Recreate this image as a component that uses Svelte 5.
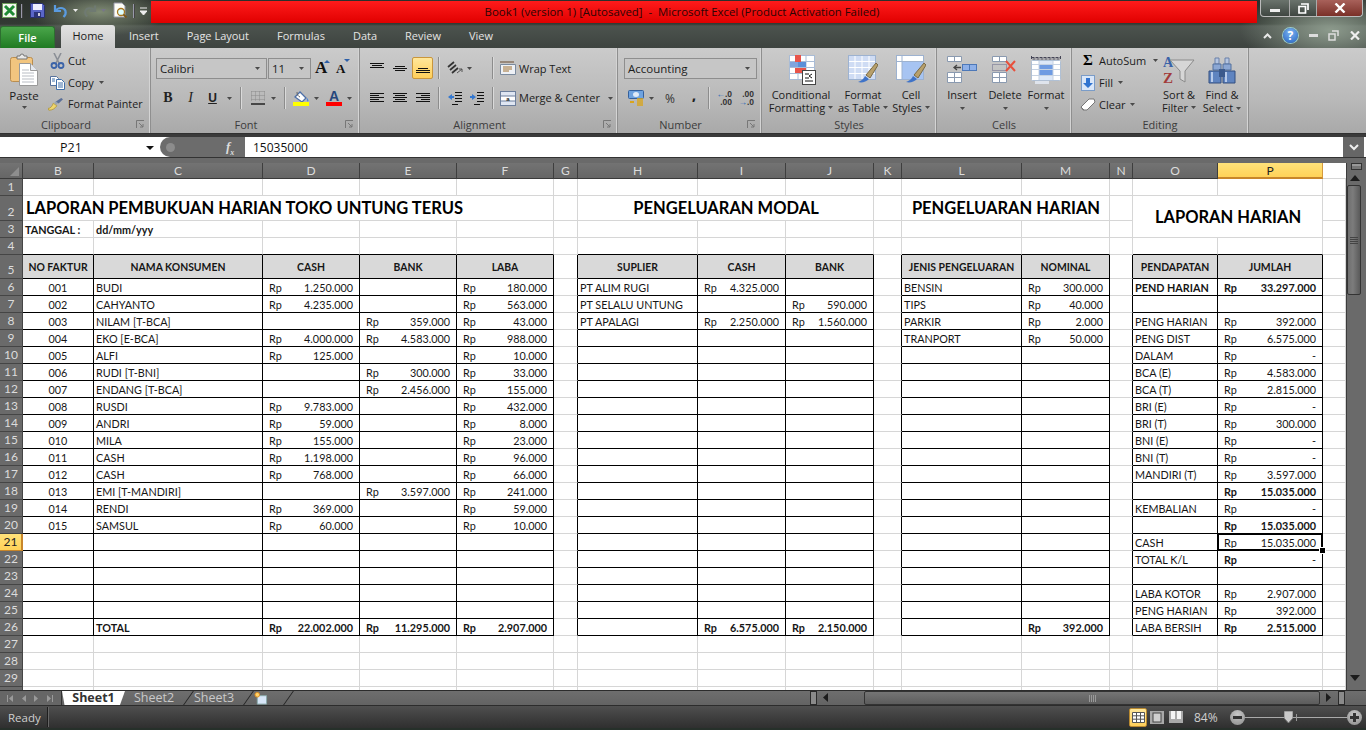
<script>
  const cols = ['A','B','C','D','E','F','G','H','I','J','K','L','M','N','O','P','Q'];
  const rows = Array.from({ length: 30 }, (_, i) => i + 1);
  const blocks = [['B','F'],['H','J'],['L','M'],['O','P']];
  const ci = (c) => cols.indexOf(c);
  const inBlock = (c, r) => r >= 5 && r <= 26 && blocks.some(([a, b]) => c >= ci(a) && c <= ci(b));

  const cells = {};
  const T = (k, t, cls = '') => (cells[k] = { t, cls });
  const R = (k, v, b = false, rb = b) => (cells[k] = { v, b, rb });

  T('B2', 'LAPORAN PEMBUKUAN HARIAN TOKO UNTUNG TERUS', 'title');
  T('H2', 'PENGELUARAN MODAL', 'title ctr');
  T('L2', 'PENGELUARAN HARIAN', 'title ctr');
  T('O2', 'LAPORAN HARIAN', 'title ctr');
  T('B3', 'TANGGAL :', 'bold');
  T('C3', 'dd/mm/yyy', 'bold');
  const heads = { B: 'NO FAKTUR', C: 'NAMA KONSUMEN', D: 'CASH', E: 'BANK', F: 'LABA', H: 'SUPLIER', I: 'CASH', J: 'BANK', L: 'JENIS PENGELUARAN', M: 'NOMINAL', O: 'PENDAPATAN', P: 'JUMLAH' };
  for (const c in heads) T(c + '5', heads[c], 'head');

  const sales = [
    ['BUDI','1.250.000','','180.000'],['CAHYANTO','4.235.000','','563.000'],['NILAM [T-BCA]','','359.000','43.000'],
    ['EKO [E-BCA]','4.000.000','4.583.000','988.000'],['ALFI','125.000','','10.000'],['RUDI [T-BNI]','','300.000','33.000'],
    ['ENDANG [T-BCA]','','2.456.000','155.000'],['RUSDI','9.783.000','','432.000'],['ANDRI','59.000','','8.000'],
    ['MILA','155.000','','23.000'],['CASH','1.198.000','','96.000'],['CASH','768.000','','66.000'],
    ['EMI [T-MANDIRI]','','3.597.000','241.000'],['RENDI','369.000','','59.000'],['SAMSUL','60.000','','10.000']
  ];
  sales.forEach(([n, d, e, f], i) => {
    const r = i + 6;
    T('B' + r, String(i + 1).padStart(3, '0'), 'ctr');
    T('C' + r, n);
    if (d) R('D' + r, d);
    if (e) R('E' + r, e);
    R('F' + r, f);
  });
  T('C26', 'TOTAL', 'bold');
  R('D26', '22.002.000', true); R('E26', '11.295.000', true); R('F26', '2.907.000', true);

  T('H6', 'PT ALIM RUGI'); R('I6', '4.325.000');
  T('H7', 'PT SELALU UNTUNG'); R('J7', '590.000');
  T('H8', 'PT APALAGI'); R('I8', '2.250.000'); R('J8', '1.560.000');
  R('I26', '6.575.000', true); R('J26', '2.150.000', true);

  [['BENSIN','300.000'],['TIPS','40.000'],['PARKIR','2.000'],['TRANPORT','50.000']].forEach(([n, v], i) => {
    T('L' + (i + 6), n); R('M' + (i + 6), v);
  });
  R('M26', '392.000', true);

  const report = {
    6: ['PEND HARIAN','33.297.000',1,1], 8: ['PENG HARIAN','392.000'], 9: ['PENG DIST','6.575.000'], 10: ['DALAM','-'],
    11: ['BCA (E)','4.583.000'], 12: ['BCA (T)','2.815.000'], 13: ['BRI (E)','-'], 14: ['BRI (T)','300.000'],
    15: ['BNI (E)','-'], 16: ['BNI (T)','-'], 17: ['MANDIRI (T)','3.597.000'], 18: ['','15.035.000',0,1],
    19: ['KEMBALIAN','-'], 20: ['','15.035.000',0,1], 21: ['CASH','15.035.000'], 22: ['TOTAL K/L','-',0,0,1],
    24: ['LABA KOTOR','2.907.000'], 25: ['PENG HARIAN','392.000'], 26: ['LABA BERSIH','2.515.000',0,1]
  };
  for (const r in report) {
    const [n, v, lb, vb, rb] = report[r];
    if (n) T('O' + r, n, lb ? 'bold' : '');
    R('P' + r, v, !!vb, !!vb || !!rb);
  }

  const merges = { B2: ['cs5', 5, 1], H2: ['cs3', 3, 1], L2: ['cs2', 2, 1], O2: ['cs2 rs2', 2, 2] };
  const covered = new Set();
  for (const k in merges) {
    const c = ci(k[0]), r = +k.slice(1), [, w, h] = merges[k];
    for (let x = 0; x < w; x++) for (let y = 0; y < h; y++) if (x || y) covered.add(cols[c + x] + (r + y));
  }
  function cellClass(c, r) {
    const k = cols[c] + r;
    const m = merges[k];
    const ex = c + (m ? m[1] : 1) - 1, ey = r + (m ? m[2] : 1) - 1;
    let s = 'cell';
    if (inBlock(ex, r) || inBlock(ex + 1, r)) s += ' br';
    if (inBlock(c, ey) || inBlock(c, ey + 1)) s += ' bb';
    if (m) s += ' ' + m[0];
    if (cells[k] && cells[k].cls) s += ' ' + cells[k].cls;
    if (k === 'P21') s += ' sel';
    return s;
  }
  const tabs = ['Insert', 'Page Layout', 'Formulas', 'Data', 'Review', 'View'];
</script>

{#snippet arrow(cls = '')}
  <svg class="arr {cls}" width="5" height="3" viewBox="0 0 5 3"><path d="M0 0h5L2.500 3z" fill="#4a4a4a"/></svg>
{/snippet}
{#snippet launcher()}
  <svg class="launch" width="9" height="9" viewBox="0 0 9 9"><path d="M.5 8V.5H8M3 3l4 4M7 4v3H4" fill="none" stroke="#777"/></svg>
{/snippet}
{#snippet lines(d, cls = '')}
  <svg class={cls} width="14" height="12" viewBox="0 0 14 12"><path {d} stroke="#111" fill="none"/></svg>
{/snippet}

<div class="win">
  <div class="glass">
    <header class="titlebar">
      <div class="qat">
        <svg class="ml2" width="15" height="15" viewBox="0 0 15 15"><rect x=".5" y=".5" width="14" height="14" fill="#f4f7ee" stroke="#6c9c5a"/><path d="M3 3l9 9M12 3l-9 9" stroke="#1f8a35" stroke-width="3"/></svg>
        <i class="qsep ml4"></i>
        <svg class="ml7" width="15" height="15" viewBox="0 0 15 15"><path d="M.5.5h12l2 2v12H.500z" fill="#5a66c8" stroke="#28306e"/><rect x="3" y="1" width="9" height="6" fill="#eef"/><rect x="4" y="9" width="7" height="5" fill="#2c3478"/><rect x="8" y="10" width="2" height="3" fill="#ccd"/></svg>
        <svg class="ml8" width="15" height="14" viewBox="0 0 15 14"><path d="M2 1v6h6M2.500 7C5 3 11 3 12.500 7c.6 2 0 4-2 6" fill="none" stroke="#5a9be0" stroke-width="2.200"/></svg>
        <svg class="ml5 qarr" width="5" height="3" viewBox="0 0 5 3"><path d="M0 0h5L2.500 3z" fill="#eee"/></svg>
        <svg class="ml5" width="14" height="14" viewBox="0 0 15 14"><path d="M13 1v6H7M12.500 7C10 3 4 3 2.500 7c-.6 2 0 4 2 6" fill="none" stroke="#6f7a72" stroke-width="2.200"/></svg>
        <svg class="ml4 qarr" width="5" height="3" viewBox="0 0 5 3"><path d="M0 0h5L2.500 3z" fill="#778"/></svg>
        <svg class="ml6" width="16" height="17" viewBox="0 0 16 17"><path d="M2 1h8l3 3v11H2z" fill="#fdfdf6" stroke="#99a"/><circle cx="9" cy="10" r="3.500" fill="#dff" stroke="#a9761e" stroke-width="1.300"/><path d="M11.500 12.500l3 3" stroke="#7a5a1e" stroke-width="2"/></svg>
        <i class="qsep ml5"></i>
        <svg class="ml5" width="7" height="8" viewBox="0 0 7 8"><path d="M0 1h7M0 4h7L3.500 8z" stroke="#eee" fill="#eee"/></svg>
      </div>
      <div class="redbar">Book1 (version 1) [Autosaved]  -  Microsoft Excel (Product Activation Failed)</div>
      <div class="winbtns">
        <span class="wb min"><i></i></span>
        <span class="wb res"><svg width="11" height="11" viewBox="0 0 11 11"><path d="M3 1h7v6M1 3.500h6.500V10H1z" fill="none" stroke="#fff" stroke-width="1.700"/></svg></span>
        <span class="wb cls"><svg width="12" height="10" viewBox="0 0 12 10"><path d="M1.500 .5l9 9M10.500 .5l-9 9" stroke="#fff" stroke-width="2.400"/></svg></span>
      </div>
    </header>
    <nav class="tabs">
      <span class="file">File</span>
      <span class="home">Home</span>
      {#each tabs as t}<span class="tab">{t}</span>{/each}
      <span class="helpset">
        <svg width="9" height="6" viewBox="0 0 9 6"><path d="M1 5l3.500-3.500L8 5" fill="none" stroke="#e8e8e8" stroke-width="2"/></svg>
        <span class="help">?</span>
        <i class="hmin"></i>
        <svg width="11" height="11" viewBox="0 0 11 11"><path d="M4 1h6v5M1 4h6v6H1z" fill="none" stroke="#ddd" stroke-width="1.500"/></svg>
        <svg width="10" height="9" viewBox="0 0 10 9"><path d="M1 .5l8 8M9 .5l-8 8" stroke="#eee" stroke-width="2.200"/></svg>
      </span>
    </nav>
  </div>

  <section class="ribbon">
    <div class="group g-clip">
      <div class="body">
        <div class="paste">
          <svg width="28" height="33" viewBox="0 0 28 33"><rect x=".5" y="4.500" width="22" height="24" rx="2" fill="#f2c57f" stroke="#b98d50"/><path d="M7 6V3h3a2 2 0 0 1 4 0h3v3z" fill="#e8e8e8" stroke="#777"/><path d="M9.500 10.500h11l7 7v15h-18z" fill="#fff" stroke="#9a9a9a"/><path d="M20.500 10.500v7h7" fill="#e4e8ef" stroke="#9a9a9a"/><path d="M12 17h7M12 20h12M12 23h12M12 26h12M12 29h12" stroke="#b9bdc4"/></svg>
          <span class="lbl">Paste</span>
          {@render arrow()}
        </div>
        <div class="small">
          <div class="si"><svg width="15" height="16" viewBox="0 0 15 16"><path d="M4 0l5 10M11 0L6 10" stroke="#8b8f96" stroke-width="1.600"/><circle cx="4" cy="12.500" r="2.500" fill="none" stroke="#3b63a8" stroke-width="1.800"/><circle cx="11" cy="12.500" r="2.500" fill="none" stroke="#3b63a8" stroke-width="1.800"/></svg><span>Cut</span></div>
          <div class="si"><svg width="15" height="14" viewBox="0 0 15 14"><path d="M.5.500h6l2 2v7h-8z" fill="#fff" stroke="#56719c"/><path d="M6.500 3.500h5l3 3v7h-8z" fill="#fff" stroke="#3f6eaa"/><path d="M8 7h5M8 9h5M8 11h5M2 3h3M2 5h3" stroke="#3f6eaa"/></svg><span>Copy</span>{@render arrow('ml5')}</div>
          <div class="si"><svg class="painter" width="17" height="15" viewBox="0 0 17 15"><path d="M0 12c3 0 5-3 6-6l4 3c-2 3-5 5-9 5z" fill="#efd66e" stroke="#b59b3c"/><path d="M7 5.500l2-2 2.500 2-2 2.500z" fill="#9aa4b2"/><path d="M9 4l6-4 2 1.500-5 5z" fill="#5a6f98"/></svg><span class="fp">Format Painter</span></div>
        </div>
      </div>
      <div class="glabel gl">Clipboard{@render launcher()}</div>
    </div>

    <div class="group g-font">
      <div class="body col">
        <div class="r r1">
          <span class="combo c-font">Calibri{@render arrow()}</span>
          <span class="combo c-size">11{@render arrow()}</span>
          <span class="growA ml4">A<svg width="6" height="3" viewBox="0 0 6 3"><path d="M0 3h6L3 0z" fill="#2d5fa8"/></svg></span>
          <span class="shrinkA ml6">A<svg width="6" height="3" viewBox="0 0 6 3"><path d="M0 0h6L3 3z" fill="#2d5fa8"/></svg></span>
        </div>
        <div class="r r2">
          <span class="fmt fb ml6">B</span>
          <span class="fmt fi ml11">I</span>
          <span class="fmt fu ml11">U</span>
          {@render arrow('ml9')}
          <i class="vsep ml8"></i>
          <svg class="ml10" width="14" height="14" viewBox="0 0 14 14"><path d="M.5.500h13M.5 4.500h13M.5 8.500h13M.5.500v10M4.500.500v10M8.500.500v10M13.500.500v10" stroke="#8a8a8a" stroke-dasharray="1 1"/><path d="M0 13h14" stroke="#222" stroke-width="1.500"/></svg>
          {@render arrow('ml6')}
          <i class="vsep ml8"></i>
          <svg class="ml8" width="17" height="16" viewBox="0 0 17 16"><path d="M2 7l5-5 6 6-4 4z" fill="#fff" stroke="#4c6fa8" stroke-width="1.300"/><path d="M4 2c0 3 1 4 3 5" stroke="#666" fill="none"/><path d="M14 8c1.500 1.500 2 3 1 3.500s-1.500-1.500-1-3.500z" fill="#4c88d8"/><rect y="12" width="16" height="4" fill="#ffff00"/></svg>
          {@render arrow('ml4')}
          <span class="colorA ml7">A<i></i></span>
          {@render arrow('ml5')}
        </div>
      </div>
      <div class="glabel gl">Font{@render launcher()}</div>
    </div>

    <div class="group g-align">
      <div class="body col">
        <div class="r r1">
          {@render lines('M0 1.500h14M2 3.500h10M0 5.500h14')}
          {@render lines('M2 4.500h10M0 6.500h14M2 8.500h10', 'ml9')}
          <span class="active ml5">{@render lines('M2 6.500h10M0 8.500h14M0 10.500h14')}</span>
          <i class="vsep ml5"></i>
          <svg class="ml8" width="16" height="14" viewBox="0 0 16 14"><path d="M1 6l6-5M3 9l6-5M5 12l6-5" stroke="#333" stroke-width="1.700"/><path d="M10 12l5-4M15 8v3M15 8h-3" stroke="#555" fill="none"/></svg>
          {@render arrow('ml4')}
          <i class="vsep ml20"></i>
          <svg class="ml7" width="16" height="14" viewBox="0 0 16 14"><path d="M.5 3.500h15v10H.5z" fill="#eef1f6" stroke="#7a8a9e"/><path d="M0 1h14" stroke="#6a4b2e"/><path d="M3 6h9M3 8h9M3 10h6" stroke="#a07030"/></svg>
          <span class="txt ml3">Wrap Text</span>
        </div>
        <div class="r r2">
          {@render lines('M0 1.500h14M0 3.500h9M0 5.500h14M0 7.500h9M0 9.500h14')}
          {@render lines('M0 1.500h14M2 3.500h10M0 5.500h14M2 7.500h10M0 9.500h14', 'ml9')}
          {@render lines('M0 1.500h14M5 3.500h9M0 5.500h14M5 7.500h9M0 9.500h14', 'ml9')}
          <i class="vsep ml8"></i>
          <svg class="ml9" width="14" height="14" viewBox="0 0 14 14"><path d="M7 1.500h7M7 4.500h7M7 7.500h7M7 10.500h7M4 13.500h6" stroke="#111"/><path d="M0 6l4-3v6z" fill="#3478d0"/><path d="M3 6h3" stroke="#3478d0" stroke-width="2"/></svg>
          <svg class="ml8" width="14" height="14" viewBox="0 0 14 14"><path d="M7 1.500h7M7 4.500h7M7 7.500h7M7 10.500h7M4 13.500h6" stroke="#111"/><path d="M6 6L2 3v6z" fill="#3478d0"/><path d="M0 6h3" stroke="#3478d0" stroke-width="2"/></svg>
          <i class="vsep ml8"></i>
          <svg class="ml7" width="16" height="15" viewBox="0 0 16 15"><rect x=".5" y=".5" width="15" height="14" fill="#dfe6f2" stroke="#6d7f9c"/><rect x="1" y="5" width="14" height="5" fill="#fff"/><path d="M1 5h14M1 10h14" stroke="#6d7f9c"/><text x="8" y="9.500" text-anchor="middle" class="mini">a</text></svg>
          <span class="txt ml3">Merge &amp; Center</span>
          {@render arrow('ml7')}
        </div>
      </div>
      <div class="glabel gl">Alignment{@render launcher()}</div>
    </div>

    <div class="group g-num">
      <div class="body col">
        <div class="r r1"><span class="combo c-num">Accounting{@render arrow()}</span></div>
        <div class="r r2">
          <svg class="ml4" width="16" height="16" viewBox="0 0 16 16"><rect x=".5" y=".5" width="15" height="8" rx="1" fill="#6ea2df" stroke="#34609c"/><ellipse cx="8" cy="4.500" rx="3" ry="2.500" fill="#dfeaf8"/><path d="M9 9h6M9 11h6M9 13h6M9 15h6" stroke="#d9a51e" stroke-width="1.500"/><path d="M2 12h4" stroke="#d9a51e" stroke-width="2"/></svg>
          {@render arrow('ml5')}
          <span class="pct ml10">%</span>
          <span class="comma ml15">,</span>
          <i class="vsep ml11"></i>
          <span class="deci ml8"><span class="d1"><b class="ar">←</b>.0</span><span>.00</span></span>
          <span class="deci ml7"><span class="d1">.00</span><span><b class="ar">→</b>.0</span></span>
        </div>
      </div>
      <div class="glabel gl">Number{@render launcher()}</div>
    </div>

    <div class="group g-styles">
      <div class="body big">
        <div class="bb1">
          <svg width="30" height="30" viewBox="0 0 30 30"><rect x="3.500" y=".5" width="25" height="24" fill="#fff" stroke="#a9bcd6"/><path d="M12 1v23M20 1v23M4 6.500h24M4 12.500h24M4 18.500h24" stroke="#a9bcd6"/><rect x="4" y="7" width="8" height="5" fill="#7fa4de"/><rect x="12" y="7" width="8" height="5" fill="#5b8fd8"/><rect x="9" y="0" width="6" height="7" fill="#e8544a"/><rect x="9" y="13" width="11" height="5" fill="#e8544a"/><rect x="16.500" y="15.500" width="13" height="14" fill="#fff" stroke="#444"/><path d="M19 19h4M26 19l-3 2 3 2M19 23h4M19 26h8" fill="none" stroke="#111"/></svg>
          <span class="lbl">Conditional</span><span class="lbl">Formatting{@render arrow('ml3')}</span>
        </div>
        <div class="bb2">
          <svg width="30" height="30" viewBox="0 0 30 30"><rect x=".5" y=".5" width="27" height="24" fill="#cfdcf4" stroke="#9db2d0"/><path d="M7 1v23M14 1v23M21 1v23M1 6.500h26M1 12.500h26M1 18.500h26" stroke="#fff"/><path d="M10 27c3-1 6-3 7-6l4 3c-3 3-7 4-11 3z" fill="#3f73c8"/><path d="M18 20l10-12 2 2-8 13z" fill="#b8a06c" stroke="#7a6a44"/></svg>
          <span class="lbl">Format</span><span class="lbl">as Table{@render arrow('ml3')}</span>
        </div>
        <div class="bb3">
          <svg width="30" height="30" viewBox="0 0 30 30"><rect x=".5" y=".5" width="27" height="24" fill="#fff" stroke="#9db2d0"/><rect x="6" y="6" width="21" height="18" fill="#a7c4f2"/><path d="M6 1v23M1 6.500h26" stroke="#9db2d0"/><path d="M10 27c3-1 6-3 7-6l4 3c-3 3-7 4-11 3z" fill="#3f73c8"/><path d="M18 20l10-12 2 2-8 13z" fill="#b8a06c" stroke="#7a6a44"/></svg>
          <span class="lbl">Cell</span><span class="lbl">Styles{@render arrow('ml3')}</span>
        </div>
      </div>
      <div class="glabel">Styles</div>
    </div>

    <div class="group g-cells">
      <div class="body big">
        <div class="bc1">
          <svg width="30" height="30" viewBox="0 0 30 30"><path d="M.5 1.500h14v5H.5zM7.500 1.500v5M.5 17.500h14v10H.5zM7.500 17.500v10M.5 22.500h14" fill="#fff" stroke="#8a9ab0"/><rect x="15.500" y="9.500" width="14" height="6" fill="#8eb0e8" stroke="#4d78b8"/><path d="M22.500 9.500v6" stroke="#4d78b8"/><path d="M14 12.500H7M10 10l-3 2.500 3 2.500" fill="none" stroke="#444" stroke-width="1.300"/></svg>
          <span class="lbl">Insert</span>{@render arrow()}
        </div>
        <div class="bc2">
          <svg width="26" height="30" viewBox="0 0 26 30"><path d="M.5 1.500h14v5H.5zM7.500 1.500v5M.5 17.500h14v10H.5zM7.500 17.500v10M.5 22.500h14" fill="#fff" stroke="#8a9ab0"/><path d="M.5 9.500h14v6H.5z" fill="none" stroke="#668" stroke-dasharray="1 1"/><path d="M14 6l9 10M23 6l-9 10" stroke="#e8503c" stroke-width="2"/></svg>
          <span class="lbl">Delete</span>{@render arrow()}
        </div>
        <div class="bc3">
          <svg width="30" height="30" viewBox="0 0 30 30"><path d="M.5 1v3h29V1M.5 2.500h29" fill="none" stroke="#445" stroke-dasharray="3 1"/><rect x=".5" y="5.500" width="29" height="20" rx="1" fill="#fff" stroke="#b0c0d4"/><rect x="8" y="6" width="14" height="19" fill="#dde8f8"/><rect x="8" y="9" width="14" height="11" fill="#6f9be2"/><path d="M8 6v19M22 6v19M1 9.500h28M1 14.500h28M1 20.500h28" stroke="#c6d2e2"/><rect x="4" y="26" width="14" height="3" fill="#dfe4ec"/></svg>
          <span class="lbl">Format</span>{@render arrow()}
        </div>
      </div>
      <div class="glabel">Cells</div>
    </div>

    <div class="group g-edit">
      <div class="body">
        <div class="small ed">
          <div class="si"><span class="sigma">Σ</span><span>AutoSum</span>{@render arrow('ml7')}</div>
          <div class="si"><svg width="14" height="16" viewBox="0 0 14 16"><rect x=".5" y=".5" width="13" height="15" fill="#d9e6f8" stroke="#7a9cc8"/><path d="M5 3h4v5h3l-5 5-5-5h3z" fill="#2f73d0"/></svg><span>Fill</span>{@render arrow('ml5')}</div>
          <div class="si"><svg width="16" height="13" viewBox="0 0 16 13"><path d="M1 9l8-8h5l1 3-8 8H3z" fill="#fff" stroke="#777"/><path d="M1 9l3 3" stroke="#777"/></svg><span>Clear</span>{@render arrow('ml4')}</div>
        </div>
        <div class="be1">
          <svg width="32" height="30" viewBox="0 0 32 30"><text x="0" y="12" class="sortA">A</text><text x="0" y="28" class="sortZ">Z</text><path d="M7 5h24l-9 11v11l-5-3v-8z" fill="#d6d6d6" stroke="#8a8a8a"/></svg>
          <span class="lbl">Sort &amp;</span><span class="lbl">Filter{@render arrow('ml3')}</span>
        </div>
        <div class="be2">
          <svg width="28" height="28" viewBox="0 0 28 28"><path d="M7 1h4v6H7zM17 1h4v6h-4z" fill="#b5c6e2" stroke="#6a80a8"/><path d="M5 7h8v6H5zM15 7h8v6h-8z" fill="#8ba7d4" stroke="#52709e"/><path d="M1 14h12v12H1zM15 14h12v12H15z" fill="#5f84c0" stroke="#334f80"/><rect x="11" y="12" width="6" height="8" fill="#3c5a8c"/><path d="M4 15v10M18 15v10" stroke="#b8cbea" stroke-width="2"/></svg>
          <span class="lbl">Find &amp;</span><span class="lbl">Select{@render arrow('ml3')}</span>
        </div>
      </div>
      <div class="glabel">Editing</div>
    </div>
  </section>

  <div class="fbar">
    <div class="namebox"><span>P21</span><svg width="8" height="4" viewBox="0 0 8 4"><path d="M0 0h8L4 4z" fill="#111"/></svg></div>
    <div class="pill"><i class="dot"></i><em>f<sub>x</sub></em></div>
    <div class="formula">15035000</div>
    <div class="fexp"><svg width="10" height="7" viewBox="0 0 10 7"><path d="M1 1l4 4 4-4" fill="none" stroke="#eee" stroke-width="2"/></svg></div>
  </div>

  <div class="sheetwrap">
    <div class="grid">
      {#each ['', ...cols.slice(1, 16), ''] as h, i}
        <div class="ch" class:act={h === 'P'} class:blank={i === 16}>{#if i === 0}<svg class="corner" width="9" height="9" viewBox="0 0 9 9"><path d="M9 0v9H0z" fill="#8e8e8e"/></svg>{/if}{h}</div>
      {/each}
      {#each rows as r}
        <div class="rh" class:act={r === 21}>{r < 30 ? r : ''}</div>
        {#each cols.slice(1) as col, j}
          {#if !covered.has(col + r)}
            {@const c = cells[col + r]}
            <div class={cellClass(j + 1, r)}>
              {#if c && c.v}
                <span class="acct" class:bold={c.b}><span class:bold={c.rb}>Rp</span><span>{c.v}</span></span>
              {:else if c}
                <span class="tx">{c.t}</span>
              {/if}
            </div>
          {/if}
        {/each}
      {/each}
    </div>
    <aside class="vscroll">
      <i class="vsplit"></i>
      <svg class="up" width="10" height="6" viewBox="0 0 10 6"><path d="M0 6h10L5 0z" fill="#1c1c1c"/></svg>
      <div class="vthumb"><svg width="8" height="7" viewBox="0 0 8 7"><path d="M0 .5h8M0 2.500h8M0 4.500h8M0 6.500h8" stroke="#444"/></svg></div>
      <svg class="down" width="10" height="6" viewBox="0 0 10 6"><path d="M0 0h10L5 6z" fill="#1c1c1c"/></svg>
    </aside>
  </div>

  <div class="tabbar">
    <div class="nav">
      <svg width="6" height="7" viewBox="0 0 6 7"><path d="M0 0h1v7H0zM6 0v7L2 3.500z" fill="#9a9a9a"/></svg>
      <svg width="4" height="7" viewBox="0 0 4 7"><path d="M4 0v7L0 3.500z" fill="#9a9a9a"/></svg>
      <svg width="4" height="7" viewBox="0 0 4 7"><path d="M0 0v7l4-3.500z" fill="#9a9a9a"/></svg>
      <svg width="6" height="7" viewBox="0 0 6 7"><path d="M5 0h1v7H5zM0 0v7l4-3.500z" fill="#9a9a9a"/></svg>
    </div>
    <span class="sh on">Sheet1</span>
    <span class="sh">Sheet2</span>
    <span class="sh">Sheet3</span>
    <span class="sh new"><svg width="14" height="14" viewBox="0 0 14 14"><path d="M3 4h10v9H3z" fill="#d7e6f8" stroke="#8aa"/><circle cx="3" cy="3" r="2.500" fill="#ffd36a" stroke="#e08a1e"/></svg></span>
    <div class="hfill"></div>
    <i class="hsplit"></i>
    <svg class="harr" width="5" height="9" viewBox="0 0 5 9"><path d="M5 0v9L0 4.500z" fill="#1c1c1c"/></svg>
    <div class="hthumb"><svg width="7" height="7" viewBox="0 0 7 7"><path d="M.5 0v7M2.500 0v7M4.500 0v7M6.500 0v7" stroke="#999"/></svg></div>
    <svg class="harr2" width="5" height="9" viewBox="0 0 5 9"><path d="M0 0v9l5-4.500z" fill="#1c1c1c"/></svg>
    <i class="hsplit2"></i>
  </div>

  <footer class="status">
    <span class="ready">Ready</span>
    <i class="stsep"></i>
    <div class="stright">
      <span class="vb on"><svg width="13" height="11" viewBox="0 0 13 11"><path d="M.5.500h12v10H.500zM.5 3.800h12M.5 7.200h12M4.500.500v10M8.500.500v10" fill="#fff" stroke="#555"/></svg></span>
      <svg class="ml3" width="14" height="13" viewBox="0 0 14 13"><rect width="14" height="13" fill="#a9a9a9"/><rect x="3" y="2" width="8" height="9" fill="#cfcfcf" stroke="#444"/></svg>
      <svg class="ml5" width="14" height="12" viewBox="0 0 14 12"><rect width="14" height="12" fill="#a9a9a9"/><path d="M2 0h4v8H2zM8 0h4v8H8z" fill="#f5f5f5"/></svg>
      <span class="pctz">84%</span>
      <span class="zb"><i></i></span>
      <div class="slider"><svg class="thumb" width="9" height="12" viewBox="0 0 9 12"><path d="M0 0h9v7l-4.500 5L0 7z" fill="#c9c9c9" stroke="#777"/></svg><i class="tick"></i></div>
      <span class="zb plus"><i></i></span>
    </div>
  </footer>
  <div class="edge"></div>
</div>

<style>
  :global(body) { margin: 0; background: #222; }
  .win { width: 1366px; height: 730px; display: flex; flex-direction: column; overflow: hidden; font-family: "Open Sans", "Noto Sans", sans-serif; font-size: 11px; color: #1c1c1c; background: #3a3a3a; }
  i, em { font-style: normal; display: block; }
  svg { display: block; flex: none; }
  .ml2 { margin-left: 2px; } .ml3 { margin-left: 3px; } .ml4 { margin-left: 4px; } .ml5 { margin-left: 5px; }
  .ml6 { margin-left: 6px; } .ml7 { margin-left: 7px; } .ml8 { margin-left: 8px; } .ml9 { margin-left: 9px; }
  .ml10 { margin-left: 10px; } .ml11 { margin-left: 11px; } .ml15 { margin-left: 15px; } .ml20 { margin-left: 20px; }

  .glass { height: 48px; flex: none; background:
    radial-gradient(ellipse 70px 24px at 100px 12px, #7f8b74 0, rgba(127,139,116,0) 100%),
    radial-gradient(ellipse 90px 40px at 1330px 30px, #8c9a8c 0, rgba(140,154,140,0) 100%),
    linear-gradient(#2b302c 0, #333a34 24px, #4c534e 26px, #3e4440 47px); }
  .titlebar { height: 23px; display: flex; }
  .qat { width: 151px; flex: none; display: flex; align-items: center; padding-bottom: 2px; box-sizing: border-box; }
  .qsep { width: 2px; height: 14px; background: #99a; border-right: 1px solid #444; box-sizing: border-box; }
  .redbar { width: 1106px; flex: none; height: 22px; margin-top: 1px; background: linear-gradient(#ff1b1b, #e00000); text-align: center; line-height: 21px; font-size: 11.400px; color: #2c0505; white-space: pre; padding-right: 44px; box-sizing: border-box; }
  .winbtns { margin-left: 3px; display: flex; height: 17px; border: 1px solid #bbb; border-top: 0; border-radius: 0 0 4px 4px; box-sizing: border-box; width: 103px; background: linear-gradient(#6a736c, #3f4641); }
  .wb { display: flex; align-items: center; justify-content: center; border-right: 1px solid #aaa; }
  .min { width: 28px; } .min i { width: 10px; height: 3px; background: #eee; margin-top: 5px; }
  .res { width: 26px; }
  .cls { flex: 1; border: 0; background: linear-gradient(#a8615a, #7a3028); border-radius: 0 0 4px 0; }

  .tabs { height: 25px; display: flex; align-items: flex-end; color: #e4e4e4; }
  .file { width: 55px; height: 22px; background: linear-gradient(#4aa64a, #1f7a22); border: 1px solid #2d6e30; border-bottom: 0; border-radius: 3px 3px 0 0; box-sizing: border-box; color: #fff; text-align: center; line-height: 21px; font-weight: 600; }
  .home { margin-left: 6px; width: 54px; height: 23px; background: linear-gradient(#e2e2e2, #cbcbcb); border-radius: 3px 3px 0 0; text-align: center; line-height: 22px; color: #1a1a1a; }
  .tab { padding: 0 14px; height: 23px; line-height: 22px; }
  .helpset { margin-left: auto; display: flex; align-items: center; height: 25px; width: 103px; padding-right: 6px; box-sizing: border-box; justify-content: space-between; }
  .help { width: 15px; height: 15px; border-radius: 50%; background: radial-gradient(circle at 50% 30%, #7db4f2, #2362c0); color: #fff; font-weight: 700; font-size: 12px; text-align: center; line-height: 15px; box-shadow: 0 0 0 1px #9cc; }
  .hmin { width: 9px; height: 3px; background: #ddd; }

  .ribbon { height: 85px; flex: none; display: flex; background: linear-gradient(#cbcbcb, #b9b9b9 60%, #a9a9a9); border-bottom: 1px solid #303030; box-sizing: content-box; }
  .group { display: flex; flex-direction: column; flex: none; box-sizing: border-box; border-right: 1px solid #8f8f8f; box-shadow: inset -1px 0 0 #d4d4d4; height: 85px; }
  .g-clip { width: 151px; } .g-font { width: 209px; } .g-align { width: 258px; } .g-num { width: 144px; }
  .g-styles { width: 175px; } .g-cells { width: 135px; } .g-edit { width: 177px; }
  .body { flex: 1; display: flex; min-height: 0; }
  .col { flex-direction: column; padding-top: 9px; box-sizing: border-box; }
  .g-font .col, .g-font .body { padding-left: 5px; }
  .g-align .body { padding-left: 10px; }
  .g-num .body { padding-left: 6px; }
  .r { display: flex; align-items: center; }
  .r1 { height: 22px; }
  .r2 { height: 22px; margin-top: 8px; }
  .r2 .txt { margin-top: -2px; }
  .glabel { height: 18px; flex: none; position: relative; text-align: center; line-height: 19px; color: #3c3c3c; font-size: 11px; }
  .gl { padding-right: 18px; }
  .launch { position: absolute; right: 5px; top: 5px; }
  .arr { display: inline-block; vertical-align: middle; }
  .lbl { display: block; line-height: 13px; white-space: nowrap; text-align: center; }

  .paste { width: 50px; display: flex; flex-direction: column; align-items: center; padding: 5px 2px 0 0; box-sizing: border-box; }
  .paste .lbl { margin-top: 3px; font-size: 11.500px; }
  .paste .arr { margin-top: 4px; }
  .small { display: flex; flex-direction: column; padding-top: 2px; }
  .si { height: 22px; display: flex; align-items: center; gap: 3px; white-space: nowrap; }
  .si > svg { width: 15px; }
  .si .arr { width: 5px; }
  .si .ml5 { margin-left: 2px; } .si .ml7 { margin-left: 4px; } .si .ml4 { margin-left: 1px; }
  .painter { margin-left: -2px; margin-right: 2px; }
  .fp { font-size: 10.700px; }
  .ed { width: 88px; padding-left: 8px; box-sizing: border-box; }
  .ed .si > svg:not(.arr) { width: 16px; }
  .sigma { width: 16px; text-align: center; font-family: "Liberation Serif", serif; font-weight: 700; font-size: 15px; color: #000; }

  .combo { display: flex; align-items: center; justify-content: space-between; height: 21px; box-sizing: border-box; border: 1px solid #8e8e8e; padding: 0 6px 0 3px; background: #c6c6c6; font-size: 11.500px; }
  .c-font { width: 111px; } .c-size { width: 43px; margin-left: 1px; } .c-num { width: 133px; }
  .growA, .shrinkA { display: flex; align-items: flex-start; font-family: "Liberation Serif", serif; font-weight: 700; color: #111; }
  .growA { font-size: 17px; line-height: 18px; width: 15px; }
  .shrinkA { font-size: 13px; line-height: 18px; padding-top: 2px; width: 14px; }
  .growA svg { margin-top: 1px; margin-left: -3px; } .shrinkA svg { margin-left: -1px; margin-top: -1px; }
  .fmt { font-family: "Liberation Serif", serif; font-size: 14px; width: 11px; text-align: center; color: #222; }
  .fb { font-weight: 700; width: 12px; } .fi { font-style: italic; }
  .fu { font-family: "Liberation Sans", sans-serif; font-weight: 700; font-size: 12px; text-decoration: underline; }
  .vsep { width: 1px; height: 22px; background: #8c8c8c; box-shadow: 1px 0 0 #dadada; }
  .colorA { width: 16px; display: flex; flex-direction: column; align-items: center; font: 700 14px/12px "Liberation Sans", sans-serif; color: #27477c; }
  .colorA i { width: 16px; height: 4px; background: #f00; }
  .active { width: 21px; height: 22px; background: linear-gradient(#ffe79a, #ffcf5a); border: 1px solid #c9963c; border-radius: 2px; display: flex; align-items: center; justify-content: center; box-sizing: border-box; }
  .txt { white-space: nowrap; font-size: 11px; width: 82px; }
  .mini { font: 700 6px "Liberation Sans", sans-serif; fill: #222; }
  .pct { width: 12px; font-size: 12px; text-align: center; color: #333; }
  .comma { width: 6px; font-weight: 800; font-size: 13px; line-height: 10px; padding-bottom: 6px; color: #222; text-align: center; }
  .deci { width: 15px; display: flex; flex-direction: column; align-items: flex-end; font: 700 8.500px/8px "Liberation Sans", sans-serif; color: #333; white-space: nowrap; }
  .deci .d1 { display: block; }
  .ar { color: #2f6bb8; font-weight: 700; }
  .big { padding-top: 7px; box-sizing: border-box; }
  .big > div, .be1, .be2 { display: flex; flex-direction: column; align-items: center; flex: none; }
  .big svg:first-child, .be1 svg:first-child, .be2 svg:first-child { margin-bottom: 3px; }
  .big .arr { margin-top: 6px; margin-bottom: 0; }
  .lbl .arr { margin-top: 0; }
  .bb1 { width: 78px; } .bb2 { width: 46px; } .bb3 { width: 50px; }
  .bc1 { width: 50px; } .bc2 { width: 36px; } .bc3 { width: 46px; }
  .be1 { width: 38px; padding-top: 7px; box-sizing: border-box; } .be2 { width: 48px; padding-top: 7px; box-sizing: border-box; }
  .be2 svg:first-child { margin-top: 2px; }
  .sortA { font: 700 14px "Liberation Serif", serif; fill: #3a62a8; }
  .sortZ { font: 700 15px "Liberation Serif", serif; fill: #a23a3a; }

  .fbar { height: 20px; flex: none; margin-top: 3px; display: flex; background: #fff; border-bottom: 1px solid #1f1f1f; }
  .namebox { width: 165px; flex: none; background: #fff; display: flex; align-items: center; font-size: 12.500px; padding: 1px 0 0 60px; box-sizing: border-box; gap: 64px; color: #111; }
  .pill { width: 85px; margin-left: -5px; flex: none; background: #6c6c6c; border-radius: 11px 0 0 11px; display: flex; align-items: center; position: relative; }
  .dot { width: 9px; height: 9px; margin-left: 6px; border-radius: 50%; background: #8c8c8c; }
  .pill em { margin-left: 51px; font: italic 700 13px "Liberation Serif", serif; color: #ddd; line-height: 18px; }
  .pill sub { font-size: 8px; line-height: 0; }
  .formula { flex: 1; padding: 1px 0 0 8px; font-size: 12px; line-height: 19px; color: #111; box-sizing: border-box; }
  .fexp { width: 21px; background: #666; display: flex; align-items: center; justify-content: center; margin-right: 2px; }

  .sheetwrap { flex: none; height: 527px; margin-top: 5px; box-shadow: 0 -5px 0 #6a6a6a, 0 -6px 0 #333; display: flex; overflow: hidden; background: #fff; }
  .grid { width: 1346px; display: grid; grid-template-columns: 23px 71px 169px 97px 97px 97px 24px 120px 88px 88px 28px 120px 88px 23px 85px 105px 23px; grid-template-rows: 16px 17px 25px 17px 17px 24px repeat(25, 17px); font-family: Lato, "Open Sans", sans-serif; font-size: 10.800px; color: #161616; overflow: hidden; }
  .ch { background: linear-gradient(#737373, #666); color: #dcdcdc; font-size: 12px; text-align: center; line-height: 15px; box-sizing: border-box; border-right: 1px solid #3e3e3e; border-bottom: 1px solid #3a3a3a; position: relative; }
  .ch.blank { background: #fff; border: 0; border-bottom: 1px solid #d6d6d6; }
  .ch.act { background: linear-gradient(#ffe27a, #ffd258); color: #222; border-bottom: 2px solid #c8862a; border-right-color: #d59a3e; }
  .corner { position: absolute; right: 3px; bottom: 2px; }
  .rh { background: #6a6a6a; color: #dcdcdc; font-size: 12px; text-align: center; box-sizing: border-box; border-bottom: 1px solid #454545; border-right: 1px solid #454545; display: flex; align-items: flex-end; justify-content: center; line-height: 16px; }
  .rh.act { background: linear-gradient(#ffe27a, #ffd258); color: #222; border-right: 2px solid #c8862a; border-bottom-color: #c8862a; }
  .cell { box-sizing: border-box; border-right: 1px solid #d6d6d6; border-bottom: 1px solid #d6d6d6; display: flex; align-items: center; padding: 0 2px; white-space: nowrap; min-width: 0; position: relative; overflow: visible; }
  .cell.br { border-right-color: #000; }
  .cell.bb { border-bottom-color: #000; }
  .cs2 { grid-column: span 2; } .cs3 { grid-column: span 3; } .cs5 { grid-column: span 5; } .rs2 { grid-row: span 2; }
  .title { font-size: 16.500px; font-weight: 700; color: #000; padding-left: 3px; }
  .ctr { justify-content: center; }
  .head { justify-content: center; background: #d9d9d9; font-weight: 700; font-size: 10.400px; }
  .bold { font-weight: 700; }
  .acct { flex: 1; display: flex; justify-content: space-between; padding: 0 4px; }
  .acct .bold { font-weight: 700; }
  .sel::after { content: ""; position: absolute; left: -1px; top: -1px; right: -1px; bottom: -1px; border: 2px solid #000; outline: 1px solid #fff; outline-offset: -3px; pointer-events: none; }
  .sel::before { content: ""; position: absolute; right: -3px; bottom: -3px; width: 5px; height: 5px; background: #000; border: 1px solid #fff; z-index: 2; box-sizing: content-box; margin: -1px; }

  .vscroll { width: 20px; background: #6a6a6a; display: flex; flex-direction: column; align-items: flex-start; position: relative; border-left: 1px solid #3c3c3c; box-sizing: border-box; }
  .vsplit { width: 11px; height: 7px; margin-left: 4px; box-sizing: border-box; background: #777; border: 1px solid #333; box-shadow: inset 0 2px 0 #999; }
  .up { margin: 5px 0 0 3px; }
  .vthumb { width: 14px; height: 110px; margin-top: 4px; box-sizing: border-box; background: linear-gradient(90deg, #6f6f6f, #7c7c7c 40%, #5a5a5a); border: 1px solid #333; border-radius: 2px; display: flex; align-items: center; justify-content: center; }
  .down { margin: 380px 0 0 3px; }

  .tabbar { height: 14px; flex: none; display: flex; align-items: stretch; background: linear-gradient(#6e6e6e, #636363); border-top: 1px solid #2c2c2c; border-bottom: 1px solid #2c2c2c; color: #c9c9c9; font-family: "Open Sans", sans-serif; font-size: 12.500px; }
  .nav { width: 62px; flex: none; box-sizing: border-box; display: flex; align-items: center; justify-content: space-between; padding: 0 8px 0 7px; background: #666; border-right: 1px solid #333; }
  .sh { width: 60px; flex: none; text-align: center; line-height: 14px; position: relative; left: -1px; }
  .sh:not(.on)::after { content: ""; position: absolute; top: 0; bottom: 0; right: -5px; width: 0; border-right: 1px solid #222; transform: skewX(-35deg); }
  .sh.on { width: 63px; left: 0; background: #fff; color: #333; font-weight: 700; clip-path: polygon(0 0, 100% 0, 92% 100%, 4% 100%); }
  .sh.new { width: 40px; display: flex; align-items: center; padding-left: 10px; box-sizing: border-box; }
  .sh.new svg { height: 13px; }
  .hfill { flex: 1; }
  .hsplit { width: 7px; height: 14px; border: 1px solid #2a2a2a; background: #8a8a8a; box-sizing: border-box; }
  .harr { margin: 2px 0 0 6px; }
  .hthumb { width: 456px; margin-left: 36px; box-sizing: border-box; background: linear-gradient(#757575, #5c5c5c); border: 1px solid #333; border-radius: 2px; display: flex; align-items: center; justify-content: center; }
  .harr2 { margin: 2px 0 0 6px; }
  .hsplit2 { width: 7px; height: 14px; margin: 0 21px 0 7px; border: 1px solid #2a2a2a; background: #8a8a8a; box-sizing: border-box; }

  .status { height: 22px; flex: none; display: flex; align-items: center; background: linear-gradient(#4f4f4f, #2f2f2f); color: #cfcfcf; font-size: 11.500px; }
  .ready { margin-left: 8px; width: 39px; }
  .stsep { width: 1px; height: 20px; background: #1e1e1e; box-shadow: 1px 0 0 #666; }
  .stright { margin-left: auto; display: flex; align-items: center; padding-right: 4px; }
  .vb { width: 18px; height: 19px; background: linear-gradient(#ffe79a, #ffcf5a); border: 1px solid #b98a30; box-sizing: border-box; border-radius: 2px; display: flex; align-items: center; justify-content: center; }
  .pctz { width: 22px; margin-left: 11px; color: #d0d0d0; font-size: 12px; }
  .zb { width: 15px; height: 15px; margin-left: 14px; border-radius: 50%; background: radial-gradient(circle at 50% 30%, #c8c8c8, #8a8a8a); display: flex; align-items: center; justify-content: center; position: relative; }
  .zb i { width: 9px; height: 3px; background: #333; }
  .plus { margin-left: 0; }
  .plus::after { content: ""; position: absolute; left: 6px; top: 3px; width: 3px; height: 9px; background: #333; }
  .slider { width: 102px; height: 1px; background: #aaa; display: flex; align-items: center; position: relative; }
  .thumb { position: absolute; left: 39px; top: -6px; }
  .tick { position: absolute; left: 51px; top: -3px; width: 1px; height: 7px; background: #999; }
  .edge { flex: 1; background: #26302a; }
</style>
